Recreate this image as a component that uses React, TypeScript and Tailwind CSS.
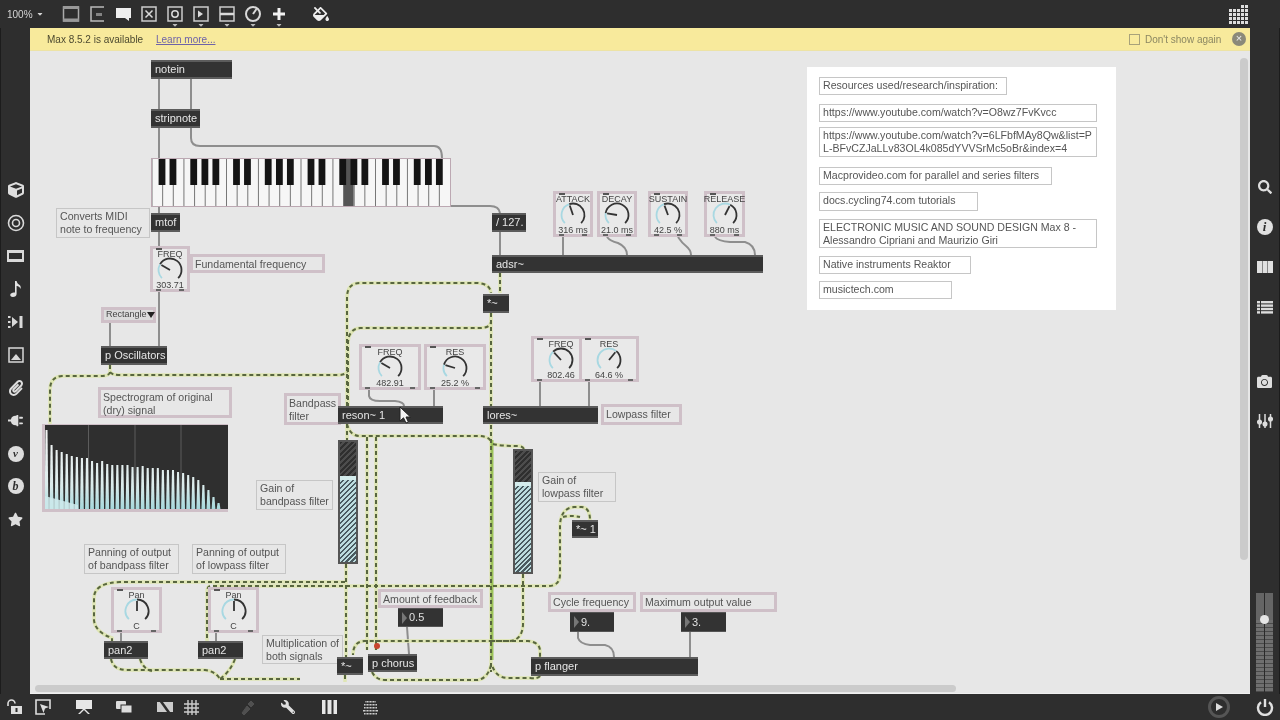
import React from "react";
import { FaCube, FaPaperclip, FaPlug, FaStar, FaSearch, FaCamera, FaFillDrip, FaWrench, FaCaretDown } from "react-icons/fa";

const C = "#d9d9d9";

function Sq({ children, caret }: { children?: React.ReactNode; caret?: boolean }) {
  return (
    <div className="relative w-[26px] h-[28px] flex items-center justify-center">
      <svg width="18" height="18" viewBox="0 0 18 18" fill="none" stroke={C}>{children}</svg>
      {caret && <FaCaretDown className="absolute bottom-[-1px] left-[9px] text-[#bbb] text-[8px]" />}
    </div>
  );
}

function TopBar() {
  return (
    <div className="h-[28px] bg-[#2e2e2e] flex items-center pl-[7px] shrink-0">
      <span className="text-[10px] text-[#d5d5d5] w-[38px] flex items-center gap-[3px]">100% <FaCaretDown className="text-[8px]" /></span>
      <div className="flex ml-[13px]">
        <Sq><rect x="1.5" y="2" width="15" height="14" strokeWidth="1.5" stroke="#aaa" /><rect x="1" y="1" width="16" height="3" fill="#999" stroke="none" /><rect x="1" y="13.5" width="16" height="3" fill="#999" stroke="none" /></Sq>
        <Sq><path d="M16 2H3v14h13" strokeWidth="1.5" stroke="#bbb" /><path d="M9 8v3M11 8v3M13 8v3" strokeWidth="1" /></Sq>
        <Sq><path d="M2 3h15v10h-2v3l-4-3H2z" fill="#eee" stroke="none" /></Sq>
        <Sq><rect x="2" y="2" width="14" height="14" strokeWidth="1.5" stroke="#ccc" /><path d="M5.5 5.5l7 7M12.5 5.5l-7 7" strokeWidth="1.5" /></Sq>
        <Sq caret><rect x="2" y="2" width="14" height="14" strokeWidth="1.5" stroke="#ccc" /><circle cx="9" cy="9" r="3.2" strokeWidth="1.5" /></Sq>
        <Sq caret><rect x="2" y="2" width="14" height="14" strokeWidth="1.5" stroke="#ccc" /><path d="M6 5.5l5 3.5-5 3.5z" fill={C} stroke="none" /></Sq>
        <Sq caret><rect x="2" y="2" width="14" height="14" strokeWidth="1.5" stroke="#ccc" /><path d="M2 9h14" strokeWidth="2.5" /></Sq>
        <Sq caret><circle cx="9" cy="9" r="7" strokeWidth="2" /><path d="M9 9l3.5-5" strokeWidth="2" /></Sq>
        <Sq caret><path d="M9 3v12M3 9h12" strokeWidth="3" stroke="#f2f2f2" /></Sq>
        <div className="w-[16px]" />
        <div className="w-[26px] h-[28px] flex items-center justify-center"><FaFillDrip className="text-[#eee] text-[16px]" /></div>
      </div>
      <div className="ml-auto mr-[32px] grid grid-cols-5 gap-[1px] w-[19px]">
        {Array.from({ length: 25 }).map((_, i) => <span key={i} className={i < 3 ? "h-[3px] bg-transparent" : "h-[3px] bg-[#ddd]"} />)}
      </div>
    </div>
  );
}

function LeftBar() {
  const icons: React.ReactNode[] = [
    <FaCube className="text-[16px]" />,
    <svg width="18" height="18" viewBox="0 0 18 18" fill="none" stroke={C} strokeWidth="1.6"><circle cx="9" cy="9" r="7.5" /><circle cx="9" cy="9" r="3.5" /></svg>,
    <svg width="17" height="14" viewBox="0 0 17 14" fill={C}><path d="M0 1h17v12H0zM2 4v6h13V4z" fillRule="evenodd" /></svg>,
    <svg width="11" height="16" viewBox="0 0 11 16" fill="#e2e2e2"><path d="M5 0h1.6c.3 2 1.6 3 3 4 1.2 1 1.4 2.6.9 4-.3-1.6-1.8-2.7-3.9-3V13c0 1.700-1.700 3-3.700 3S0 15 .3 13.600C.6 12.200 2.800 11 5 11.600z" /></svg>,
    <svg width="16" height="16" viewBox="0 0 16 16" fill={C}><path d="M4 3l6 5-6 5z" /><rect x="11.5" y="2" width="3" height="12" /><rect x="0" y="2" width="2.5" height="2" /><rect x="0" y="7" width="2.5" height="2" /><rect x="0" y="12" width="2.500" height="2" /></svg>,
    <svg width="16" height="16" viewBox="0 0 16 16"><rect x="1" y="1" width="14" height="14" fill="none" stroke={C} strokeWidth="1.5" /><path d="M3 13l5-6 5 6z" fill={C} /></svg>,
    <FaPaperclip className="text-[16px]" />,
    <FaPlug className="text-[15px] rotate-90" />,
    <div className="w-[16px] h-[16px] rounded-full bg-[#ddd] text-[#2e2e2e] text-[11px] font-bold italic flex items-center justify-center [font-family:'Liberation_Serif',serif]">v</div>,
    <div className="w-[16px] h-[16px] rounded-full bg-[#ddd] text-[#2e2e2e] text-[12px] font-bold italic flex items-center justify-center [font-family:'Liberation_Serif',serif]">b</div>,
    <FaStar className="text-[15px]" />,
  ];
  return (
    <div className="w-[30px] bg-[#2e2e2e] border-l border-l-[#1c1c1c] shrink-0 flex flex-col items-center pt-[146px] text-[#dedede]">
      {icons.map((ic, i) => <div key={i} className="h-[32.9px] flex items-center justify-center">{ic}</div>)}
    </div>
  );
}

function RightBar() {
  const Row = ({ children }: { children: React.ReactNode }) => <div className="h-[40px] flex items-center justify-center">{children}</div>;
  return (
    <div className="w-[30px] bg-[#2e2e2e] border-r border-r-[#1c1c1c] shrink-0 flex flex-col items-center pt-[139px] text-[#dedede]">
      <Row><FaSearch className="text-[14px]" /></Row>
      <Row><div className="w-[16px] h-[16px] rounded-full bg-[#e0e0e0] text-[#2e2e2e] text-[13px] font-bold italic flex items-center justify-center [font-family:'Liberation_Serif',serif]">i</div></Row>
      <Row><svg width="16" height="13" viewBox="0 0 16 13" fill="#e0e0e0"><rect x="0" y="0" width="5" height="12" /><rect x="5.500" y="0" width="5" height="12" /><rect x="11" y="0" width="5" height="12" /></svg></Row>
      <Row><svg width="16" height="14" viewBox="0 0 16 14" fill="#ddd"><rect x="0" y="1" width="3" height="2.400" /><rect x="4" y="1" width="12" height="2.400" /><rect x="0" y="4.400" width="3" height="2.400" /><rect x="4" y="4.400" width="12" height="2.400" /><rect x="0" y="7.800" width="3" height="2.400" /><rect x="4" y="7.800" width="12" height="2.400" /><rect x="0" y="11.200" width="3" height="2.400" /><rect x="4" y="11.200" width="12" height="2.400" /></svg></Row>
      <div className="h-[34px]" />
      <Row><FaCamera className="text-[15px]" /></Row>
      <Row><svg width="16" height="16" viewBox="0 0 16 16" stroke="#ddd" strokeWidth="1.5" fill="#ddd"><path d="M2.500 1v14M8 1v14M13.500 1v14" /><circle cx="2.500" cy="9" r="1.800" /><circle cx="8" cy="11" r="1.800" /><circle cx="13.500" cy="6" r="1.800" /></svg></Row>
      <div className="mt-auto mb-[2px] relative w-[17px] h-[99px] flex">
        <div className="flex-1 flex flex-col">
          <div className="h-[27px] bg-[#656565]" />
          <div className="flex-1 bg-[repeating-linear-gradient(180deg,#6f6f6f_0,#6f6f6f_3px,#4a4a4a_3px,#4a4a4a_4px)]" />
        </div>
        <div className="w-[1px] bg-[#2a2a2a]" />
        <div className="flex-1 flex flex-col">
          <div className="h-[27px] bg-[#656565]" />
          <div className="flex-1 bg-[repeating-linear-gradient(180deg,#6f6f6f_0,#6f6f6f_3px,#4a4a4a_3px,#4a4a4a_4px)]" />
        </div>
        <div className="absolute left-[4px] top-[22px] w-[9px] h-[9px] rounded-full bg-[#e6e6e6]" />
      </div>
    </div>
  );
}

function BottomBar() {
  const At = ({ w, children }: { w: number; children?: React.ReactNode }) => <div className="h-full flex items-center justify-center shrink-0" style={{ width: w }}>{children}</div>;
  return (
    <div className="h-[26px] bg-[#2e2e2e] flex items-center shrink-0 text-[#dedede]">
      <At w={30}><svg width="18" height="16" viewBox="0 0 18 16" fill="none"><path d="M2 7V4.500a3.500 3.500 0 0 1 7 0" stroke="#ddd" strokeWidth="1.6" /><rect x="5" y="7" width="11" height="8" fill="#ddd" /><rect x="9.500" y="9" width="2" height="4" fill="#2e2e2e" /></svg></At>
      <At w={26}><svg width="16" height="16" viewBox="0 0 16 16" fill="none"><path d="M15 10V1H1v14h9" stroke="#ddd" strokeWidth="1.6" /><path d="M5 5l9 3-4 1.500L8.500 14z" fill="#ddd" /></svg></At>
      <At w={8} />
      <At w={40}><svg width="16" height="16" viewBox="0 0 16 16" fill="#e6e6e6"><rect x="0" y="1" width="16" height="9" /><path d="M7 10L2 15h2l4-4 4 4h2l-5-5z" /></svg></At>
      <At w={40}><svg width="16" height="14" viewBox="0 0 16 14" fill="#ddd"><rect x="0" y="1" width="10" height="8" rx="1" /><rect x="5" y="5" width="11" height="8" stroke="#2e2e2e" /></svg></At>
      <At w={42}><svg width="16" height="14" viewBox="0 0 16 14" fill="#ccc"><rect x="0" y="2" width="16" height="10" /><path d="M3 0l10 14" stroke="#2e2e2e" strokeWidth="2.500" /></svg></At>
      <At w={10}><svg className="shrink-0" width="15" height="15" viewBox="0 0 15 15" stroke="#ccc" strokeWidth="1.400"><path d="M4 0v15M8 0v15M12 0v15M0 4h15M0 8h15M0 12h15" /></svg></At>
      <At w={36} />
      <At w={30}><svg width="15" height="15" viewBox="0 0 15 15" stroke="#505050" fill="#505050"><path d="M2 13l5-7 3 3-6 6zM8 4l3-3 3 3-3 3z" /></svg></At>
      <At w={52}><FaWrench className="text-[14px] scale-x-[-1]" /></At>
      <At w={30}><svg width="15" height="14" viewBox="0 0 15 14" fill="#e6e6e6"><path d="M0 0h3.500v14H0zM5.500 0h4v14h-4zM11.500 0H15v14h-3.500z" /></svg></At>
      <At w={52}><svg width="15" height="15" viewBox="0 0 15 15" fill="#ccc"><path d="M2 1h11v1.600H2zM1 4h13v1.600H1zM1 7h13v1.600H1zM0 10h15v1.600H0zM1 13h13v1.600H1z" /><path d="M3 0v15M6 0v15M9 0v15M12 0v15" stroke="#2e2e2e" strokeWidth=".8" /></svg></At>
      <div className="ml-auto w-[22px] h-[22px] rounded-full border-[3px] border-[#555] flex items-center justify-center mr-[26px]"><div className="w-0 h-0 border-y-[4px] border-y-transparent border-l-[7px] border-l-[#ddd]" /></div>
      <svg className="mr-[6px]" width="18" height="18" viewBox="0 0 18 18" fill="none" stroke="#e0e0e0" strokeWidth="2.400"><path d="M5 4.200a7 7 0 1 0 8 0" /><path d="M9 1v8" /></svg>
    </div>
  );
}

function Banner() {
  return (
    <div className="h-[23px] bg-[#f8ea9c] border-b border-b-[#ede3a5] flex items-center pl-[17px] pr-[4px] text-[10px] shrink-0">
      <span className="text-[#4d4a30] w-[109px]">Max 8.5.2 is available</span>
      <span className="text-[#6e63a8] underline">Learn more...</span>
      <div className="ml-auto w-[11px] h-[11px] border border-[#a8a27a]" />
      <span className="ml-[5px] text-[#8b8762] w-[87px]">Don't show again</span>
      <div className="w-[14px] h-[14px] rounded-full bg-[#8b8979] text-[#eee] text-[11px] leading-[13px] text-center">×</div>
    </div>
  );
}

type Box = [number, number, number, number];
const pos = (b: Box) => ({ left: b[0] - 30, top: b[1] - 51, width: b[2] - b[0], height: b[3] - b[1] });

function Obj({ b, t }: { b: Box; t: string }) {
  return (
    <div className="absolute bg-[#333] border-y-[2px] border-y-[#5c5c5c] text-[#e6e6e6] text-[11px] leading-none flex items-center pl-[4px] whitespace-nowrap overflow-hidden" style={pos(b)}>{t}</div>
  );
}

function Num({ b, t }: { b: Box; t: string }) {
  return (
    <div className="absolute bg-[#333] border-y border-y-[#555] text-[#e0e0e0] text-[11px] leading-none flex items-center pl-[4px] gap-[2px]" style={pos(b)}>
      <span className="w-0 h-0 border-y-[6px] border-y-transparent border-l-[5px] border-l-[#777]" />{t}
    </div>
  );
}

function Note({ b, t, pink }: { b: Box; t: string; pink?: boolean }) {
  return (
    <div className={pink
      ? "absolute border-[3px] border-[#cfc0c8] text-[#555] text-[10.6px] leading-[13px] pl-[2px] pt-[1px]"
      : "absolute border border-[#c6c6c6] text-[#555] text-[10.6px] leading-[13px] pl-[3px] pt-[1px]"} style={pos(b)}>{t}</div>
  );
}

function Dial({ b, label, value, f }: { b: Box; label: string; value: string; f: number }) {
  const r = 11.5;
  const c = 14;
  const pt = (a: number, rr: number) => [c + rr * Math.sin((a * Math.PI) / 180), c - rr * Math.cos((a * Math.PI) / 180)];
  const a = -135 + 270 * f;
  const [sx, sy] = pt(-135, r);
  const [vx, vy] = pt(a, r);
  const [ex, ey] = pt(135, r);
  const [nx, ny] = pt(a, 10);
  return (
    <div className="absolute bg-[#e9e9e9] border-[3px] border-[#cfc0c8] flex flex-col items-center text-[#444] text-[9px] leading-[10px]" style={pos(b)}>
      <span className="absolute top-[-1px] left-[3px] w-[6px] h-[2px] bg-[#555]" />
      <span className="absolute bottom-[-2px] left-[3px] w-[5px] h-[2px] bg-[#666]" />
      <span className="absolute bottom-[-2px] right-[3px] w-[5px] h-[2px] bg-[#666]" />
      <span>{label}</span>
      <svg width="28" height="28" viewBox="0 0 28 28" fill="none" className="-mt-[3px] -mb-[4px] shrink-0">
        <path d={`M${sx} ${sy}A${r} ${r} 0 ${a > 45 ? 1 : 0} 1 ${vx} ${vy}`} stroke="#a8d8e2" strokeWidth="1.8" />
        <path d={`M${vx} ${vy}A${r} ${r} 0 ${a < -45 ? 1 : 0} 1 ${ex} ${ey}`} stroke="#333" strokeWidth="1.8" />
        <path d={`M14 14L${nx} ${ny}`} stroke="#333" strokeWidth="1.8" />
      </svg>
      <span>{value}</span>
    </div>
  );
}

function Fader({ b, h }: { b: Box; h: number }) {
  return (
    <div className="absolute border-2 border-[#555] flex flex-col" style={pos(b)}>
      <div className="bg-[repeating-linear-gradient(135deg,#2f2f2f_0,#2f2f2f_2px,#4d4d4d_2px,#4d4d4d_4px)]" style={{ height: h }} />
      <div className="h-[4px] bg-[#d4ecec]" />
      <div className="flex-1 bg-[repeating-linear-gradient(135deg,#bcdcde_0,#bcdcde_2px,#4a5a60_2px,#4a5a60_3.5px)]" />
    </div>
  );
}

function Keyboard() {
  const w = 298 / 28;
  const blacks = [0.62, 1.65, 3.6, 4.65, 5.68];
  return (
    <div className="absolute border border-[#bca8b2]" style={pos([151, 158, 451, 207])}>
      <svg className="w-full h-full" viewBox="0 0 298 47" preserveAspectRatio="none">
        <rect width="298" height="47" fill="#f6f6f6" />
        <rect x={w * 17.95} width={w} height="47" fill="#555" />
        {Array.from({ length: 28 }).map((_, i) => <path key={i} d={`M${i * w} 0V47`} stroke="#777" strokeWidth="1" />)}
        {[0, 1, 2, 3].map((o) => blacks.map((k) => <rect key={o + "-" + k} x={(o * 7 + k) * w} width="6.8" height="26" fill="#141414" />))}
      </svg>
    </div>
  );
}

const tops = [430, 445, 450, 452, 454, 456, 457, 458, 458, 461, 463, 461, 464, 465, 465, 465, 465, 467, 467, 466, 468, 468, 468, 470, 470, 470, 472, 473, 475, 477, 480, 485, 490, 497, 503];

function Spectro() {
  return (
    <div className="absolute bg-[#2f2f2f] border-[3px] border-[#cfc0c8] border-t-[1px] border-r-0" style={pos([42, 424, 228, 512])}>
      <svg className="w-full h-full" viewBox="45 425 183 84" preserveAspectRatio="none">
        <defs>
          <linearGradient id="sg" x1="0" y1="430" x2="0" y2="509" gradientUnits="userSpaceOnUse">
            <stop offset="0" stopColor="#f4f4f4" />
            <stop offset=".7" stopColor="#dcecec" />
            <stop offset="1" stopColor="#a6d8dc" />
          </linearGradient>
        </defs>
        {[88.5, 135, 181].map((x) => <path key={x} d={`M${x} 425V509`} stroke="#5c5c5c" strokeWidth="1" />)}
        {tops.map((t, i) => {
          const x = 46 + i * 5.06;
          return <path key={i} d={`M${x - 0.5} ${t}L${x + 1.5} ${t}L${x + 2.4} 509L${x - 1.4} 509Z`} fill="url(#sg)" />;
        })}
        <path d="M45 496L78 505V509H45z" fill="#cfeaec" opacity=".85" />
      </svg>
    </div>
  );
}

const grey = [
  "M159 79V213", "M191 79V109", "M191 128V138Q191 146 200 146H434Q442 146 442 158",
  "M159 232V346", "M110 323V346", "M442 206H490Q499 206 500 213", "M500 232V255",
  "M563 237V255", "M607 237Q610 241 618 243Q627 247 627 255", "M678 237Q682 243 686 246Q691 250 691 255", "M715 237Q718 241 730 242H745Q755 245 755 255",
  "M369 390V396Q370 401 380 401H395Q404 402 404 406", "M434 390V406", "M540 382V406", "M589 382V406",
  "M407 627L409 654", "M578 632V638Q580 644 590 645H605Q614 647 614 657", "M690 632V657", "M121 633V641", "M216 633V641",
];
const signal = [
  "M110 365V372Q110 376 100 376H62Q50 377 50 390V424",
  "M110 372Q112 375 120 375H338Q345 375 347 372",
  "M347 406V296Q348 283 360 283H478Q490 284 491 293",
  "M491 313V322Q490 328 480 328H360Q349 329 348 342V406",
  "M500 273V293", "M491 313V672", "M493 444Q500 446 520 446Q523 447 524 449",
  "M347 424V440", "M347 424Q350 436 360 436H480Q490 437 491 442",
  "M367 437V650", "M376 437V650",
  "M346 564V657",
  "M345 582H120Q95 583 94 597V620Q95 632 112 638V641",
  "M210 586Q207 587 207 592V641",
  "M213 586H548Q560 586 560 574V525Q561 508 574 507H582Q590 508 590 520",
  "M563 517Q570 515 580 517",
  "M523 574V625Q522 640 510 641H364Q353 642 353 655",
  "M491 641H528Q539 642 540 650V657",
  "M111 659Q113 669 125 670H205Q215 671 220 679",
  "M140 659Q143 669 152 671", "M235 659Q230 672 220 679", "M220 679H300",
  "M372 672Q376 680 385 680H478Q488 678 491 665",
  "M540 676Q538 679 530 678H508Q496 678 492 665",
  "M345 675V682",
];

function Canvas() {
  return (
    <div className="relative flex-1 bg-[#e7e7e7] overflow-hidden border-b border-b-[#f0f0f0]">
      <svg className="absolute inset-0 w-full h-full" viewBox="30 51 1220 642" preserveAspectRatio="none" fill="none">
        {grey.map((d, i) => <path key={i} d={d} stroke="#8e8e8e" strokeWidth="2" />)}
        {signal.map((d, i) => <path key={"a" + i} d={d} stroke="#dfe6b5" strokeWidth="3.5" />)}
        <path d="M492 440V660" stroke="#9cc25a" strokeWidth="3" />
        {signal.map((d, i) => <path key={"b" + i} d={d} stroke="#58663f" strokeWidth="2" strokeDasharray="4 3" />)}
      </svg>

      <Obj b={[151, 60, 232, 79]} t="notein" />
      <Obj b={[151, 109, 200, 128]} t="stripnote" />
      <Keyboard />
      <Obj b={[151, 213, 180, 232]} t="mtof" />
      <Note b={[56, 208, 150, 238]} t="Converts MIDI note to frequency" />
      <Dial b={[150, 246, 190, 292]} label="FREQ" value="303.71" f={0.28} />
      <Note pink b={[190, 254, 325, 273]} t="Fundamental frequency" />
      <div className="absolute border-[3px] border-[#cfc0c8] bg-[#dcdcdc] text-[#444] text-[9px] flex items-center justify-between px-[2px]" style={pos([101, 307, 156, 323])}>
        Rectangle<span className="w-0 h-0 border-x-[4px] border-x-transparent border-t-[6px] border-t-[#222]" />
      </div>
      <Obj b={[101, 346, 167, 365]} t="p Oscillators" />
      <Note pink b={[98, 387, 232, 418]} t="Spectrogram of original (dry) signal" />
      <Spectro />
      <Note pink b={[284, 393, 341, 425]} t="Bandpass filter" />
      <Obj b={[338, 406, 443, 424]} t="reson~ 1" />
      <Dial b={[359, 344, 421, 390]} label="FREQ" value="482.91" f={0.28} />
      <Dial b={[424, 344, 486, 390]} label="RES" value="25.2 %" f={0.23} />
      <Dial b={[531, 336, 591, 382]} label="FREQ" value="802.46" f={0.34} />
      <Dial b={[579, 336, 639, 382]} label="RES" value="64.6 %" f={0.646} />
      <Obj b={[483, 406, 598, 424]} t="lores~" />
      <Note pink b={[601, 404, 682, 425]} t="Lowpass filter" />
      <Obj b={[492, 213, 526, 232]} t="/ 127." />
      <Obj b={[492, 255, 763, 273]} t="adsr~" />
      <Obj b={[483, 294, 509, 313]} t="*~" />
      <Dial b={[553, 191, 593, 237]} label="ATTACK" value="316 ms" f={0.43} />
      <Dial b={[597, 191, 637, 237]} label="DECAY" value="21.0 ms" f={0.2} />
      <Dial b={[648, 191, 688, 237]} label="SUSTAIN" value="42.5 %" f={0.425} />
      <Dial b={[704, 191, 745, 237]} label="RELEASE" value="880 ms" f={0.6} />
      <Fader b={[338, 440, 358, 564]} h={34} />
      <Fader b={[513, 449, 533, 574]} h={31} />
      <Note b={[256, 480, 333, 510]} t="Gain of bandpass filter" />
      <Note b={[538, 472, 616, 502]} t="Gain of lowpass filter" />
      <Obj b={[572, 520, 598, 538]} t="*~ 1" />
      <Note b={[84, 544, 179, 574]} t="Panning of output of bandpass filter" />
      <Note b={[192, 544, 286, 574]} t="Panning of output of lowpass filter" />
      <Dial b={[111, 587, 162, 633]} label="Pan" value="C" f={0.5} />
      <Dial b={[208, 587, 259, 633]} label="Pan" value="C" f={0.5} />
      <Obj b={[104, 641, 148, 659]} t="pan2" />
      <Obj b={[198, 641, 243, 659]} t="pan2" />
      <Note b={[262, 635, 343, 664]} t="Multiplication of both signals" />
      <Obj b={[337, 657, 363, 675]} t="*~" />
      <Obj b={[368, 654, 417, 672]} t="p chorus" />
      <Note pink b={[378, 589, 483, 608]} t="Amount of feedback" />
      <Num b={[398, 608, 443, 627]} t="0.5" />
      <Note pink b={[548, 592, 636, 612]} t="Cycle frequency" />
      <Note pink b={[640, 592, 777, 612]} t="Maximum output value" />
      <Num b={[570, 612, 614, 632]} t="9." />
      <Num b={[681, 612, 726, 632]} t="3." />
      <Obj b={[531, 657, 698, 676]} t="p flanger" />
      <div className="absolute w-[6px] h-[6px] rounded-full bg-[#c8452f]" style={pos([374, 643, 380, 649])} />

      <div className="absolute bg-white" style={pos([807, 67, 1116, 310])} />
      <Note b={[819, 77, 1007, 95]} t="Resources used/research/inspiration:" />
      <Note b={[819, 104, 1097, 122]} t="https://www.youtube.com/watch?v=O8wz7FvKvcc" />
      <div className="absolute border border-[#c6c6c6] text-[#555] text-[10.6px] leading-[13px] pl-[3px] pt-[1px]" style={pos([819, 127, 1097, 157])}>https://www.youtube.com/watch?v=6LFbfMAy8Qw&amp;list=P<br />L-BFvCZJaLLv83OL4k085dYVVSrMc5oBr&amp;index=4</div>
      <Note b={[819, 167, 1052, 185]} t="Macprovideo.com for parallel and series filters" />
      <Note b={[819, 192, 978, 211]} t="docs.cycling74.com tutorials" />
      <Note b={[819, 219, 1097, 248]} t="ELECTRONIC MUSIC AND SOUND DESIGN Max 8 - Alessandro Cipriani and Maurizio Giri" />
      <Note b={[819, 256, 971, 274]} t="Native instruments Reaktor" />
      <Note b={[819, 281, 952, 299]} t="musictech.com" />

      <div className="absolute rounded bg-[#cbcbcb]" style={pos([35, 685, 956, 692])} />
      <div className="absolute rounded bg-[#cbcbcb]" style={pos([1240, 58, 1248, 560])} />

      <svg className="absolute" style={pos([399, 406, 411, 424])} viewBox="0 0 12 18">
        <path d="M1 1v14l3.500-3.200L7 17l2.400-1L7 11h4.500z" fill="#f4f4f4" stroke="#222" strokeWidth="1" />
      </svg>
    </div>
  );
}

export default function App() {
  return (
    <div className="w-[1280px] h-[720px] flex flex-col bg-[#2e2e2e] overflow-hidden [font-family:'Liberation_Sans',Arial,sans-serif] blur-[0.4px]">
      <TopBar />
      <div className="flex-1 flex min-h-0">
        <LeftBar />
        <div className="flex-1 flex flex-col min-w-0">
          <Banner />
          <Canvas />
        </div>
        <RightBar />
      </div>
      <BottomBar />
    </div>
  );
}
